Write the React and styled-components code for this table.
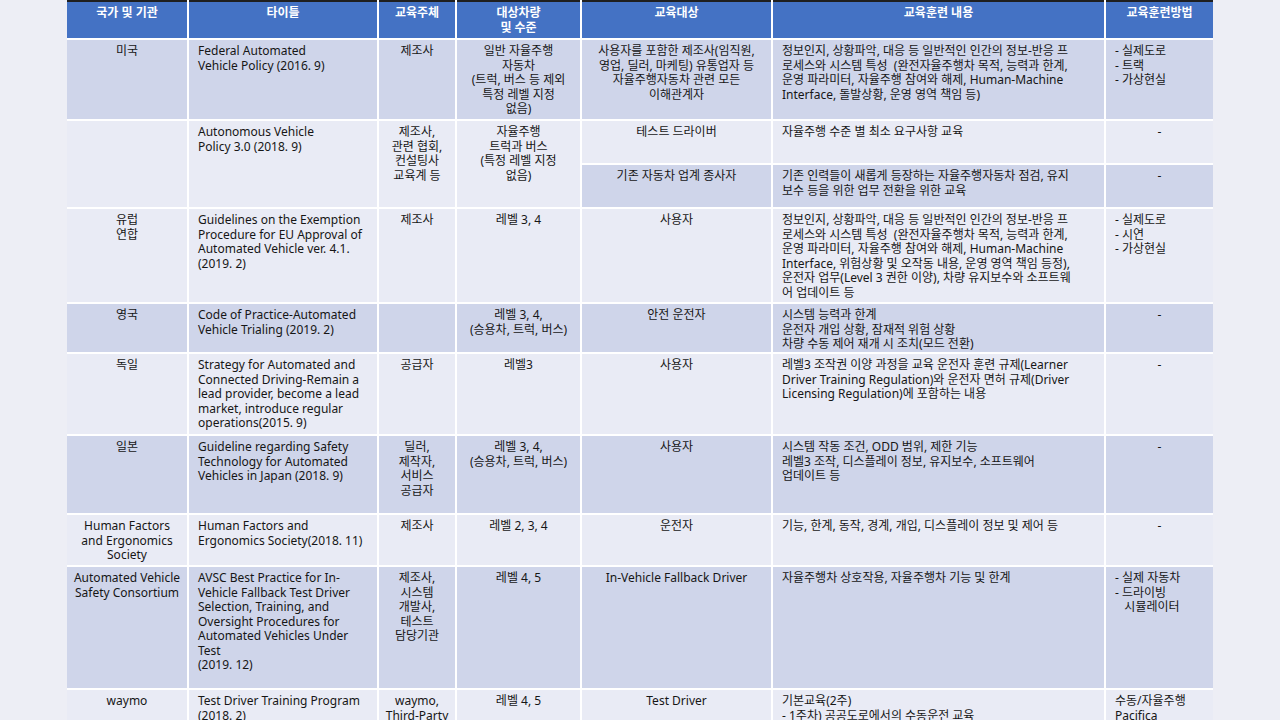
import React from "react";
import styled, { createGlobalStyle } from "styled-components";

const Colors = {
  page: "#EDEEF5",
  header: "#4472C4",
  dark: "#CFD5EA",
  light: "#E9EBF5",
  text: "#161616",
  rule: "#FFFFFF",
};

const GlobalStyle = createGlobalStyle`
  html, body {
    margin: 0;
    padding: 0;
    background: ${Colors.page};
  }
  body {
    font-family: "Noto Sans", "Noto Sans CJK KR", sans-serif;
    color: ${Colors.text};
  }
`;

const Page = styled.div`
  width: 1280px;
  height: 720px;
  overflow: hidden;
  padding-left: 67px;
  box-sizing: border-box;
`;

const Table = styled.table`
  width: 1146px;
  table-layout: fixed;
  border-collapse: collapse;
  border-top: 2px solid #1f1f1f;
  font-size: 12px;
  line-height: 14.5px;
`;

const HeadCell = styled.th`
  background: ${Colors.header};
  color: #fff;
  font-weight: 700;
  text-align: center;
  vertical-align: top;
  padding: 4px 4px 0;
  height: 32px;
  border-left: 2px solid ${Colors.rule};
  border-bottom: 2px solid ${Colors.rule};
  &:first-child { border-left: none; }
`;

const Row = styled.tr`
  height: ${(p) => p.$h}px;
`;

const Cell = styled.td`
  background: ${(p) => (p.$tone === "dark" ? Colors.dark : Colors.light)};
  text-align: ${(p) => p.$align || "center"};
  vertical-align: top;
  padding: ${(p) => (p.$align === "left" ? "4px 6px 0 9px" : "4px 3px 0")};
  border: 2px solid ${Colors.rule};
  border-top: none;
  &:first-child { border-left: none; }
  &:last-child { border-right: none; }
`;

const Line = styled.div`
  white-space: pre;
`;

const Lines = ({ items }) => (
  <>
    {items.map((t, i) => (
      <Line key={i}>{t}</Line>
    ))}
  </>
);

const columns = [
  { title: ["국가 및 기관"], w: 121 },
  { title: ["타이틀"], w: 190 },
  { title: ["교육주체"], w: 78 },
  { title: ["대상차량", "및 수준"], w: 125 },
  { title: ["교육대상"], w: 191 },
  { title: ["교육훈련 내용"], w: 333 },
  { title: ["교육훈련방법"], w: 108 },
];

// text alignment per column
const aligns = ["center", "left", "center", "center", "center", "left", "left"];

const rows = [
  {
    tone: "dark",
    h: 81,
    cells: [
      ["미국"],
      ["Federal Automated", "Vehicle Policy (2016. 9)"],
      ["제조사"],
      ["일반 자율주행", "자동차", "(트럭, 버스 등 제외", "특정 레벨 지정", "없음)"],
      ["사용자를 포함한 제조사(임직원,", "영업, 딜러, 마케팅) 유통업자 등", "자율주행자동차 관련 모든", "이해관계자"],
      [
        "정보인지, 상황파악, 대응 등 일반적인 인간의 정보-반응 프",
        "로세스와 시스템 특성  (완전자율주행차 목적, 능력과 한계,",
        "운영 파라미터, 자율주행 참여와 해제, Human-Machine",
        "Interface, 돌발상황, 운영 영역 책임 등)",
      ],
      ["- 실제도로", "- 트랙", "- 가상현실"],
    ],
  },
  "split",
  {
    tone: "light",
    h: 95,
    cells: [
      ["유럽", "연합"],
      ["Guidelines on the Exemption", "Procedure for EU Approval of", "Automated Vehicle ver. 4.1.", "(2019. 2)"],
      ["제조사"],
      ["레벨 3, 4"],
      ["사용자"],
      [
        "정보인지, 상황파악, 대응 등 일반적인 인간의 정보-반응 프",
        "로세스와 시스템 특성  (완전자율주행차 목적, 능력과 한계,",
        "운영 파라미터, 자율주행 참여와 해제, Human-Machine",
        "Interface, 위험상황 및 오작동 내용, 운영 영역 책임 등정),",
        "운전자 업무(Level 3 권한 이양), 차량 유지보수와 소프트웨",
        "어 업데이트 등",
      ],
      ["- 실제도로", "- 시연", "- 가상현실"],
    ],
  },
  {
    tone: "dark",
    h: 50,
    cells: [
      ["영국"],
      ["Code of Practice-Automated", "Vehicle Trialing (2019. 2)"],
      [],
      ["레벨 3, 4,", "(승용차, 트럭, 버스)"],
      ["안전 운전자"],
      ["시스템 능력과 한계", "운전자 개입 상황, 잠재적 위험 상황", "차량 수동 제어 재개 시 조치(모드 전환)"],
      "-",
    ],
  },
  {
    tone: "light",
    h: 82,
    cells: [
      ["독일"],
      [
        "Strategy for Automated and",
        "Connected Driving-Remain a",
        "lead provider, become a lead",
        "market, introduce regular",
        "operations(2015. 9)",
      ],
      ["공급자"],
      ["레벨3"],
      ["사용자"],
      [
        "레벨3 조작권 이양 과정을 교육 운전자 훈련 규제(Learner",
        "Driver Training Regulation)와 운전자 면허 규제(Driver",
        "Licensing Regulation)에 포함하는 내용",
      ],
      "-",
    ],
  },
  {
    tone: "dark",
    h: 79,
    cells: [
      ["일본"],
      ["Guideline regarding Safety", "Technology for Automated", "Vehicles in Japan (2018. 9)"],
      ["딜러,", "제작자,", "서비스", "공급자"],
      ["레벨 3, 4,", "(승용차, 트럭, 버스)"],
      ["사용자"],
      ["시스템 작동 조건, ODD 범위, 제한 기능", "레벨3 조작, 디스플레이 정보, 유지보수, 소프트웨어", "업데이트 등"],
      "-",
    ],
  },
  {
    tone: "light",
    h: 52,
    cells: [
      ["Human Factors", "and Ergonomics", "Society"],
      ["Human Factors and", "Ergonomics Society(2018. 11)"],
      ["제조사"],
      ["레벨 2, 3, 4"],
      ["운전자"],
      ["기능, 한계, 동작, 경계, 개입, 디스플레이 정보 및 제어 등"],
      "-",
    ],
  },
  {
    tone: "dark",
    h: 123,
    cells: [
      ["Automated Vehicle", "Safety Consortium"],
      [
        "AVSC Best Practice for In-",
        "Vehicle Fallback Test Driver",
        "Selection, Training, and",
        "Oversight Procedures for",
        "Automated Vehicles Under",
        "Test",
        "(2019. 12)",
      ],
      ["제조사,", "시스템", "개발사,", "테스트", "담당기관"],
      ["레벨 4, 5"],
      ["In-Vehicle Fallback Driver"],
      ["자율주행차 상호작용, 자율주행차 기능 및 한계"],
      ["- 실제 자동차", "- 드라이빙", "   시뮬레이터"],
    ],
  },
  {
    tone: "light",
    h: 70,
    cells: [
      ["waymo"],
      ["Test Driver Training Program", "(2018. 2)"],
      ["waymo,", "Third-Party"],
      ["레벨 4, 5"],
      ["Test Driver"],
      ["기본교육(2주)", "- 1주차) 공공도로에서의 수동운전 교육"],
      ["수동/자율주행", "Pacifica"],
    ],
  },
];

const renderCell = (content, col, tone, key, extra = {}) => {
  const dash = content === "-";
  return (
    <Cell key={key} $tone={tone} $align={dash ? "center" : aligns[col]} {...extra}>
      <Lines items={dash ? ["-"] : content} />
    </Cell>
  );
};

const SplitRows = () => (
  <>
    <Row $h={44}>
      {renderCell([], 0, "light", "a0", { rowSpan: 2 })}
      {renderCell(["Autonomous Vehicle", "Policy 3.0 (2018. 9)"], 1, "light", "a1", { rowSpan: 2 })}
      {renderCell(["제조사,", "관련 협회,", "컨설팅사", "교육계 등"], 2, "light", "a2", { rowSpan: 2 })}
      {renderCell(["자율주행", "트럭과 버스", "(특정 레벨 지정", "없음)"], 3, "light", "a3", { rowSpan: 2 })}
      {renderCell(["테스트 드라이버"], 4, "light", "a4")}
      {renderCell(["자율주행 수준 별 최소 요구사항 교육"], 5, "light", "a5")}
      {renderCell("-", 6, "light", "a6")}
    </Row>
    <Row $h={44}>
      {renderCell(["기존 자동차 업계 종사자"], 4, "dark", "b4")}
      {renderCell(
        ["기존 인력들이 새롭게 등장하는 자율주행자동차 점검, 유지", "보수 등을 위한 업무 전환을 위한 교육"],
        5,
        "dark",
        "b5"
      )}
      {renderCell("-", 6, "dark", "b6")}
    </Row>
  </>
);

export default function App() {
  return (
    <Page>
      <GlobalStyle />
      <Table>
        <colgroup>
          {columns.map((c, i) => (
            <col key={i} style={{ width: c.w }} />
          ))}
        </colgroup>
        <thead>
          <tr>
            {columns.map((c, i) => (
              <HeadCell key={i}>
                <Lines items={c.title} />
              </HeadCell>
            ))}
          </tr>
        </thead>
        <tbody>
          {rows.map((r, ri) =>
            r === "split" ? (
              <SplitRows key={ri} />
            ) : (
              <Row key={ri} $h={r.h}>
                {r.cells.map((c, ci) => renderCell(c, ci, r.tone, ci))}
              </Row>
            )
          )}
        </tbody>
      </Table>
    </Page>
  );
}
